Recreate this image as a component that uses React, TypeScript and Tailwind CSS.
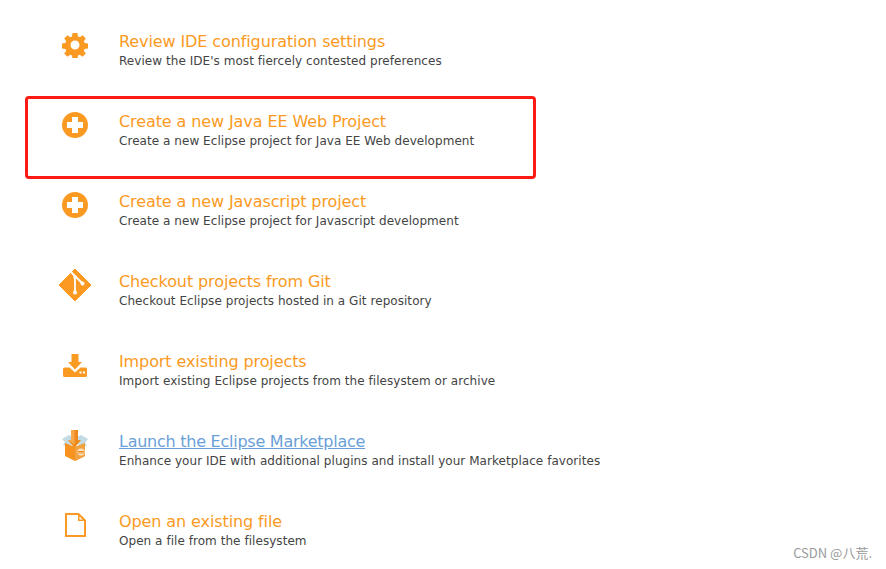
import type { ReactNode } from "react";

const orange = "#fb9a23";

function GearIcon() {
  return (
    <svg width="26" height="26" viewBox="0 0 26 26">
      <path
        fill={orange}
        fillRule="evenodd"
        d="M10.5 1h5l.5 3.400 1.800.8 2.800-2 3.200 3.200-2 2.800.8 1.800 3.400.5v5l-3.400.5-.8 1.800 2 2.800-3.200 3.200-2.800-2-1.800.8-.5 3.400h-5l-.5-3.400-1.800-.8-2.800 2-3.200-3.200 2-2.800-.8-1.800-3.400-.5v-5l3.400-.5.8-1.800-2-2.800 3.200-3.200 2.800 2 1.800-.8zM13 8.500a4.500 4.500 0 1 0 0 9 4.500 4.500 0 0 0 0-9z"
      />
    </svg>
  );
}

function PlusIcon() {
  return (
    <svg width="26" height="26" viewBox="0 0 26 26">
      <circle cx="13" cy="13" r="13" fill={orange} />
      <path d="M10 5h6v5h5v6h-5v5h-6v-5H5v-6h5z" fill="#fff" />
    </svg>
  );
}

function GitIcon() {
  return (
    <svg width="34" height="34" viewBox="0 0 34 34">
      <path d="M17 1l16 16-16 16L1 17z" fill={orange} stroke={orange} strokeLinejoin="round" strokeWidth="1" />
      <path d="M12.500 3.500l11.500 11.500M17 10v14" stroke="#fff" strokeWidth="1.800" fill="none" />
      <circle cx="17" cy="24.500" r="2" fill="#fff" />
      <circle cx="24.500" cy="15.500" r="2" fill="#fff" />
      <circle cx="17" cy="9" r="1.800" fill="#fff" />
    </svg>
  );
}

function ImportIcon() {
  return (
    <svg width="24" height="23" viewBox="0 0 24 23">
      <path
        fillRule="evenodd"
        fill={orange}
        d="M1.500 13.500H6.500l5.500 5 5.500-5h5a1.500 1.500 0 0 1 1.500 1.500v6.500a1.500 1.500 0 0 1-1.500 1.500h-21A1.500 1.500 0 0 1 0 21.500V15a1.500 1.500 0 0 1 1.500-1.500zM16.500 17.500v2h2v-2zm3.500 0v2h2v-2z"
      />
      <path d="M8.500 0h7v8h3.500L12 15.500 5 8h3.500z" fill={orange} />
    </svg>
  );
}

function MarketplaceIcon() {
  return (
    <svg width="28" height="32" viewBox="0 0 28 32">
      <path d="M1 10l7-4 6 3 6-3 7 4-3 4 2 3-5 1-7-5-7 5-5-2 2-3z" fill="#c3dbe4" />
      <path d="M4 14l10 4 10-4v13l-10 5-10-5z" fill="#f7931e" />
      <path d="M14 18l10-4v13l-10 5z" fill="#f2a341" />
      <path d="M10 1h7v10h3l-6.500 8L7 11h3z" fill="#ee8a1d" />
      <path d="M10 1h3.500v15L7 11h3z" fill="#f6a84a" />
      <circle cx="20" cy="23" r="3.600" fill="#fbe3c4" />
      <path d="M17 22.500h6M17 24h6" stroke="#f08a1c" strokeWidth="1" />
    </svg>
  );
}

function FileIcon() {
  return (
    <svg width="21" height="24" viewBox="0 0 21 24">
      <path d="M1 1h12.500L20 7.500V23H1z" fill="#fff" stroke={orange} strokeWidth="2" />
      <path d="M13 1v7h7z" fill={orange} />
      <path d="M14.500 3.500v3h3z" fill="#fff" />
    </svg>
  );
}

function Row({
  icon,
  title,
  desc,
  link,
  framed,
}: {
  icon: ReactNode;
  title: string;
  desc: string;
  link?: boolean;
  framed?: boolean;
}) {
  return (
    <div className="relative flex h-20">
      <div className="flex h-[78px] w-[150px] shrink-0 items-center justify-center">{icon}</div>
      <div className="-ml-[31px] pt-[25px]">
        <div
          className={
            link
              ? "text-[16px] leading-[22px] tracking-[-0.25px] text-[#6a9fd8] underline"
              : "text-[16px] leading-[22px] tracking-[-0.1px] text-[#fb9a23]"
          }
        >
          {title}
        </div>
        <div className="text-xs leading-[16px] tracking-[0.05px] text-[#444444]">{desc}</div>
      </div>
      {framed && (
        <div className="absolute left-[25px] top-[10px] h-[83px] w-[511px] rounded-[4px] border-[3px] border-[#fc1a14]" />
      )}
    </div>
  );
}

export default function App() {
  return (
    <div className="relative h-[569px] w-[886px] overflow-hidden bg-white pt-[6px] font-['DejaVu_Sans',sans-serif]">
      <Row
        icon={<GearIcon />}
        title="Review IDE configuration settings"
        desc="Review the IDE's most fiercely contested preferences"
      />
      <Row
        framed
        icon={<PlusIcon />}
        title="Create a new Java EE Web Project"
        desc="Create a new Eclipse project for Java EE Web development"
      />
      <Row
        icon={<PlusIcon />}
        title="Create a new Javascript project"
        desc="Create a new Eclipse project for Javascript development"
      />
      <Row
        icon={<GitIcon />}
        title="Checkout projects from Git"
        desc="Checkout Eclipse projects hosted in a Git repository"
      />
      <Row
        icon={<ImportIcon />}
        title="Import existing projects"
        desc="Import existing Eclipse projects from the filesystem or archive"
      />
      <Row
        link
        icon={<MarketplaceIcon />}
        title="Launch the Eclipse Marketplace"
        desc="Enhance your IDE with additional plugins and install your Marketplace favorites"
      />
      <Row icon={<FileIcon />} title="Open an existing file" desc="Open a file from the filesystem" />
      <span className="absolute bottom-[7px] right-[14px] font-['Noto_Sans_CJK_SC',sans-serif] text-[13px] text-[#999999]">
        CSDN @八荒.
      </span>
    </div>
  );
}
